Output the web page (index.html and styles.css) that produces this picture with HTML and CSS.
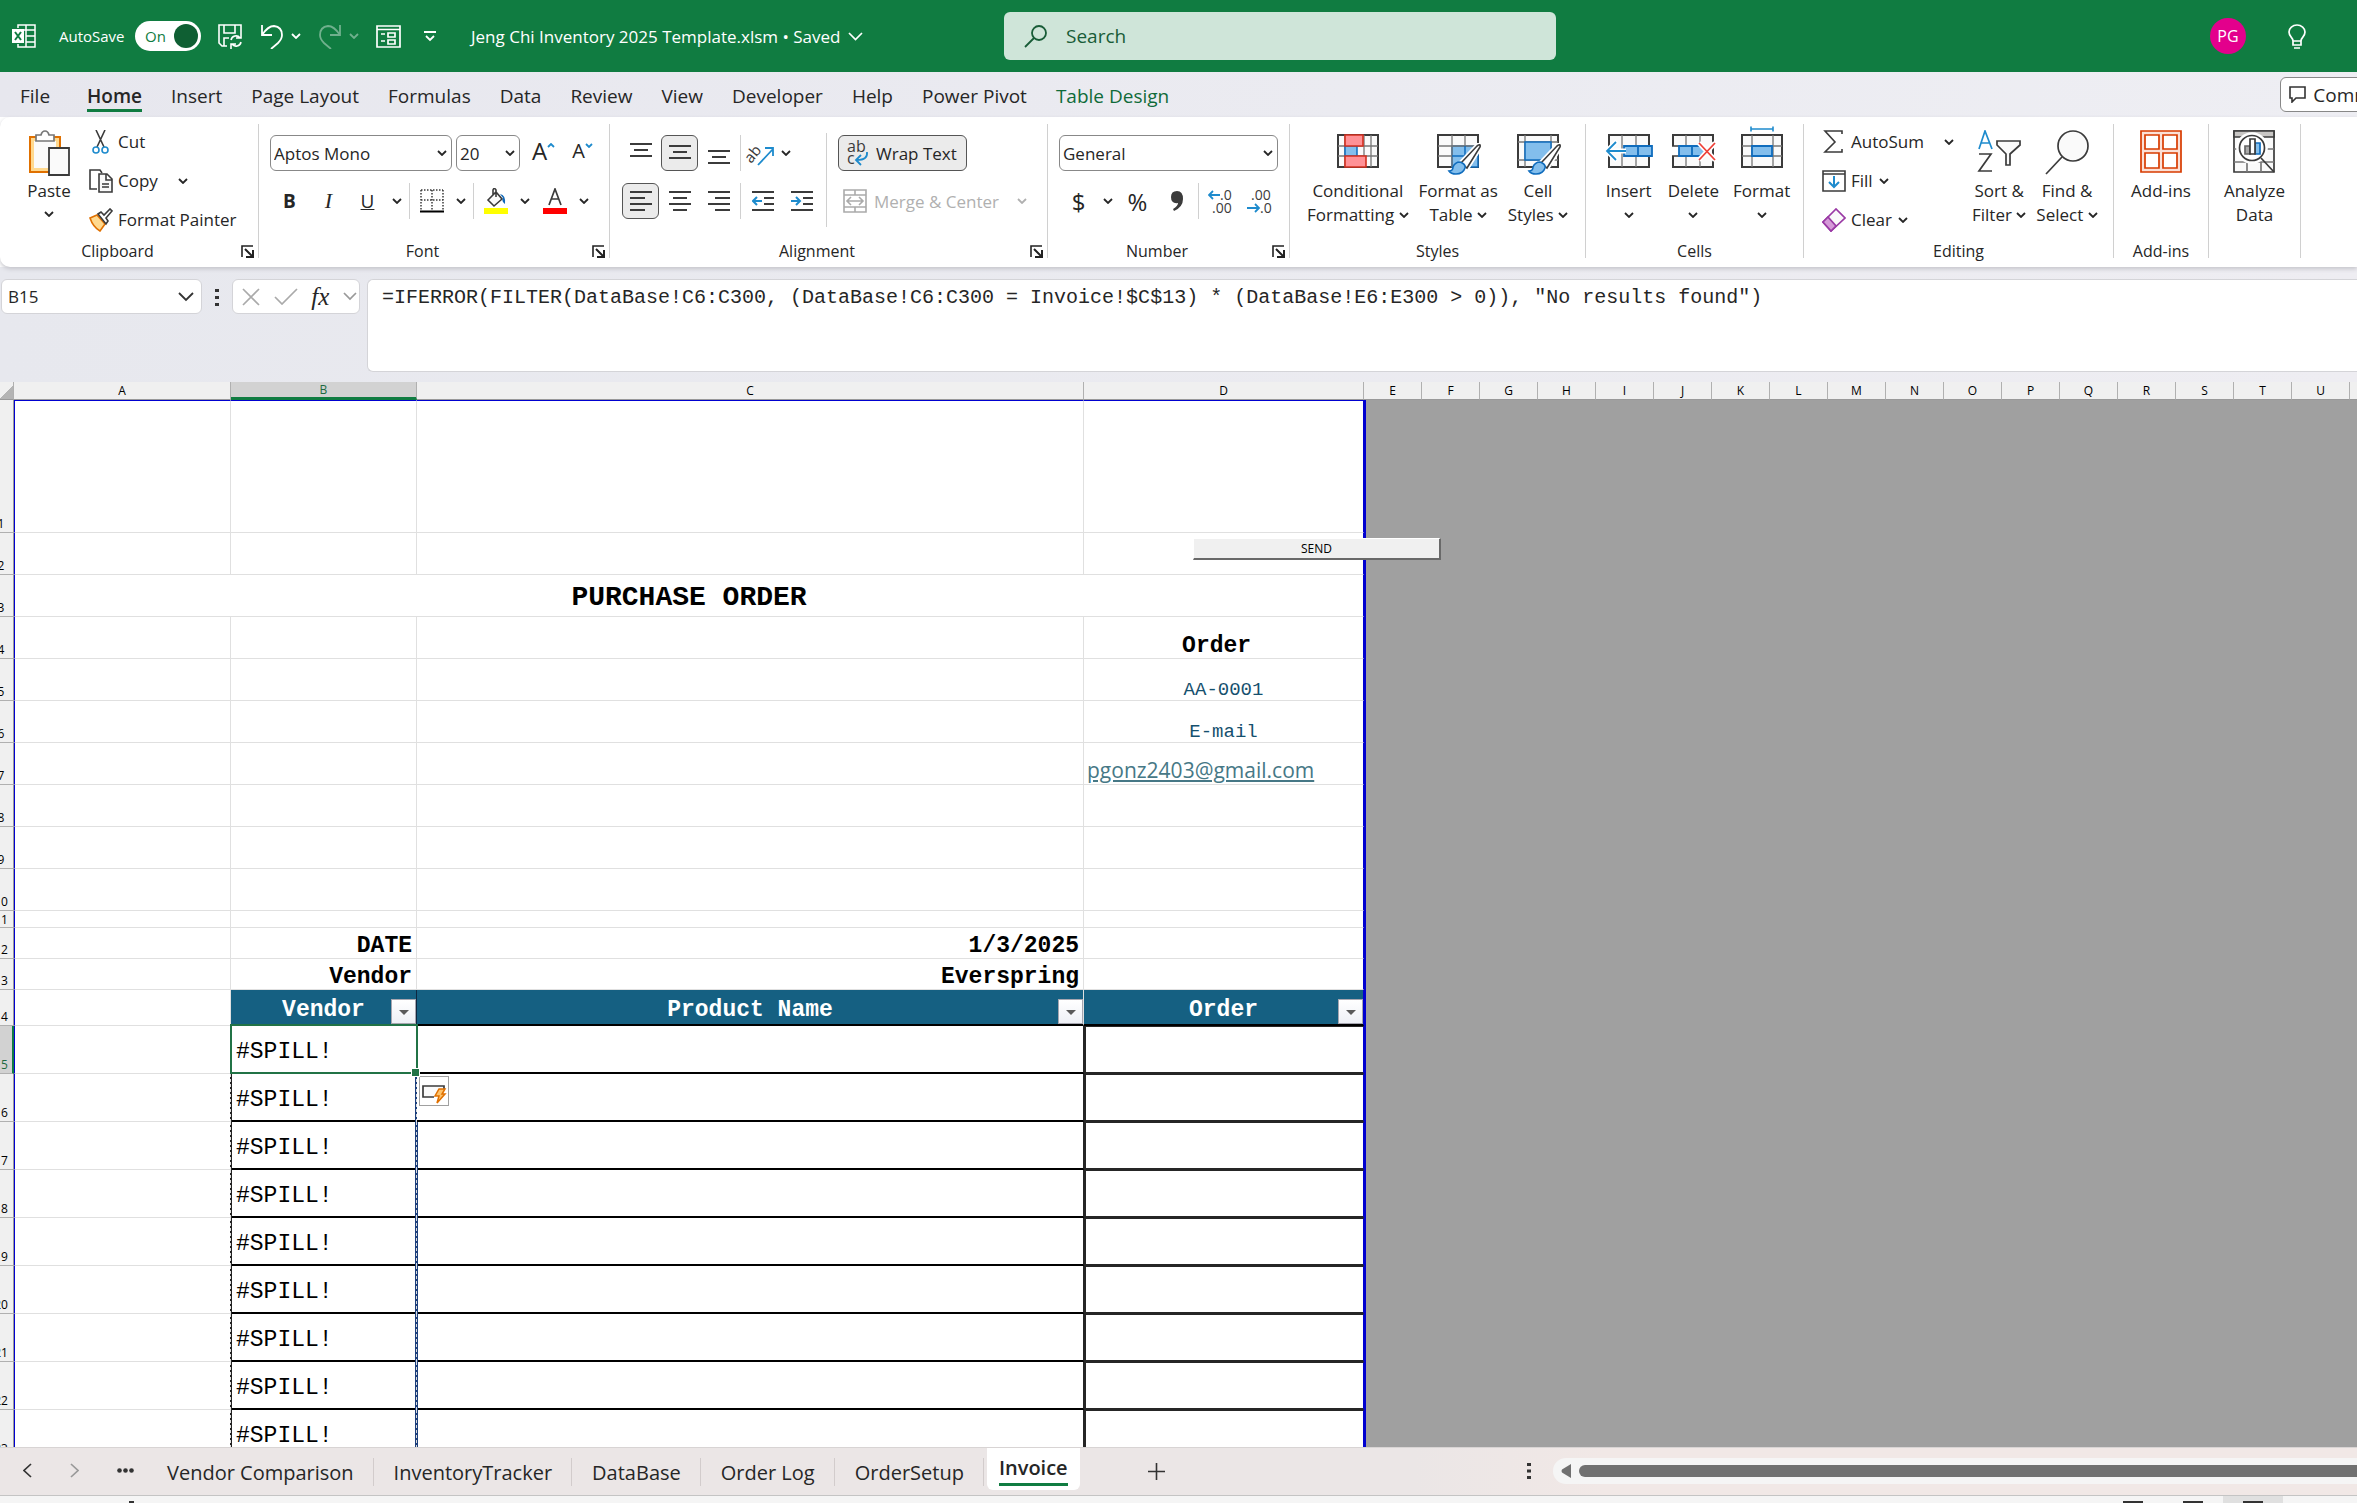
FILE: index.html
```
<!DOCTYPE html>
<html lang="en">
<head>
  <meta charset="UTF-8">
  <title>Jeng Chi Inventory 2025 Template.xlsm</title>
  <link rel="stylesheet" href="styles.css">
</head>
<body>
  <svg class="defs" aria-hidden="true">
    <symbol id="chev" viewBox="0 0 10 6"><path d="M1 1l4 4 4-4" fill="none" stroke="currentColor" stroke-width="1.8"/></symbol>
    <symbol id="launch" viewBox="0 0 13 13"><path d="M1 12V1h11" fill="none" stroke="#222" stroke-width="1.6"/><path d="M4 4l7 7M12 5v7H5" fill="none" stroke="#222" stroke-width="2"/></symbol>
    <symbol id="grid" viewBox="0 0 42 34"><path d="M1 1h40v32H1z" fill="#fafafa" stroke="#3b3b3b" stroke-width="2"/></symbol>
    <symbol id="brush" viewBox="0 0 36 32">
      <path d="M14 20L30 3q4-3 3 1L20 25z" fill="#fff" stroke="#fff" stroke-width="5"/>
      <path d="M14 20L30 3q4-3 3 1L20 25z" fill="#fff" stroke="#3b3b3b" stroke-width="1.6"/>
      <path d="M2 28q4 0 4-4 2-5 7-5 6 2 5 6-2 6-9 6-5 0-7-3z" fill="#83beec" stroke="#0f6cbd" stroke-width="1.6"/>
    </symbol>
  </svg>

  <div class="app">
    <header class="titlebar">
      <div class="quick">
        <svg class="logo" width="24" height="24" viewBox="0 0 24 24" fill="none" stroke="#fff" stroke-width="1.5">
          <path d="M6 4V1h17v22H6v-3M14 1v22M6 6h17M14 12h9M14 18h9"/>
          <path d="M0 5h12v14H0z" fill="#fff" stroke="none"/>
          <path d="M3 8l6 8M9 8l-6 8" stroke="#107c41" stroke-width="2"/>
        </svg>
        <label class="autosave" for="autosave">AutoSave
          <span class="toggle"><input type="checkbox" id="autosave" checked><span>On</span></span>
        </label>
        <button aria-label="Save"><svg width="25" height="25" viewBox="0 0 25 25" fill="none" stroke="#fff" stroke-width="1.6"><path d="M9 22H4l-3-3V1h22v8M6 1v8h11V1M6 22v-8h5M13 16a5 5 0 0 1 9-2M23 9v5h-5M23 18a5 5 0 0 1-9 2M13 25v-5h5"/></svg></button>
        <button class="undo" aria-label="Undo"><svg width="24" height="25" viewBox="0 0 24 25" fill="none" stroke="#fff" stroke-width="1.8"><path d="M2 1v10h10M2 11q6-9 12-9 8 1 8 9 0 4-4 8l-7 6"/></svg><svg class="chev"><use href="#chev"/></svg></button>
        <button class="undo off" aria-label="Redo"><svg width="24" height="25" viewBox="0 0 24 25" fill="none" stroke="#fff" stroke-width="1.8"><path d="M22 1v10H12M22 11q-6-9-12-9-8 1-8 9 0 4 4 8l7 6"/></svg><svg class="chev"><use href="#chev"/></svg></button>
        <button aria-label="Form"><svg width="25" height="23" viewBox="0 0 25 23" fill="none" stroke="#fff" stroke-width="1.7"><path d="M1 1h23v21H1zM1 4.500h23M12 8h7v4h-7zM12 15h7v4h-7zM5 9h4M5 16h4"/></svg></button>
        <button class="customize" aria-label="Customize toolbar"><svg width="12" height="11" viewBox="0 0 12 11" fill="none" stroke="#fff" stroke-width="1.800"><path d="M0 1h12M2 5l4 4 4-4"/></svg></button>
        <button class="filename">Jeng Chi Inventory 2025 Template.xlsm • Saved <svg width="15" height="9" viewBox="0 0 15 9"><path d="M1 1l6.500 6.500L14 1" fill="none" stroke="#fff" stroke-width="1.700"/></svg></button>
      </div>
      <label class="search">
        <svg width="24" height="24" viewBox="0 0 24 24" fill="none" stroke="#185c37" stroke-width="1.800"><circle cx="15" cy="9" r="7"/><path d="M10 14l-9 9"/></svg>
        <input type="text" placeholder="Search" aria-label="Search">
      </label>
      <div class="account">
        <button class="avatar">PG</button>
        <button aria-label="Tips"><svg width="18" height="25" viewBox="0 0 18 25" fill="none" stroke="#fff" stroke-width="1.700"><path d="M5 17c0-4-4-4-4-9a8 7 0 0 1 16 0c0 5-4 5-4 9zM5 17v4h8v-4M6 24h6"/></svg></button>
      </div>
    </header>

    <nav class="tabs">
      <button class="file">File</button>
      <button class="current">Home</button>
      <button>Insert</button>
      <button>Page Layout</button>
      <button>Formulas</button>
      <button>Data</button>
      <button>Review</button>
      <button>View</button>
      <button>Developer</button>
      <button>Help</button>
      <button>Power Pivot</button>
      <button class="context">Table Design</button>
      <button class="comments"><svg width="17" height="17" viewBox="0 0 17 17" fill="none" stroke="#333" stroke-width="1.600"><path d="M1 1h15v11H7l-4 4v-4H1z"/></svg>Comments</button>
    </nav>

    <section class="ribbon">
      <div class="group clipboard">
        <div class="body">
          <button class="big paste">
            <svg width="42" height="46" viewBox="0 0 42 46"><path d="M2 7h30v35H2z" fill="#ffd98f" stroke="#e07000" stroke-width="2"/><path d="M6 11h22v27H6z" fill="#fafafa"/><path d="M8 11V5h5q1-4 4-4t4 4h5v6z" fill="#fff" stroke="#777" stroke-width="1.700"/><path d="M21 18h20v27H21z" fill="#fafafa" stroke="#3b3b3b" stroke-width="1.800"/></svg>
            <span>Paste</span>
            <svg class="chev"><use href="#chev"/></svg>
          </button>
          <div class="stack">
            <button><svg width="24" height="24" viewBox="0 0 24 24" fill="none" stroke-width="1.600"><path d="M7 0l8 17M16 0L8 17" stroke="#3b3b3b"/><circle cx="7" cy="20" r="3" stroke="#1e8bcd"/><circle cx="16" cy="20" r="3" stroke="#1e8bcd"/></svg>Cut</button>
            <button><svg width="24" height="24" viewBox="0 0 24 24" fill="none" stroke="#3b3b3b" stroke-width="1.600"><path d="M8 20H1V1h10l2 3"/><path d="M10 5h8l5 5v13H10zM17 5v6h6M13 15h7M13 18h7" fill="#fafafa"/></svg>Copy<svg class="chev far"><use href="#chev"/></svg></button>
            <button><svg width="24" height="24" viewBox="0 0 24 24" stroke-width="1.600"><path d="M1 10l7-3 8 9-5 7q-7-4-10-13z" fill="#ffd98f" stroke="#e07000"/><path d="M9 6l3-2 3 3 6-6 2 2-6 7 2 3-2 3z" fill="#fff" stroke="#3b3b3b"/></svg>Format Painter</button>
          </div>
        </div>
        <footer class="has-launch">Clipboard<button aria-label="Clipboard options"><svg width="13" height="13"><use href="#launch"/></svg></button></footer>
      </div>

      <div class="group font">
        <div class="body rows">
          <div class="row">
            <span class="combo name"><select aria-label="Font"><option>Aptos Mono</option></select><svg class="chev"><use href="#chev"/></svg></span>
            <span class="combo size"><select aria-label="Font size"><option>20</option></select><svg class="chev"><use href="#chev"/></svg></span>
            <button class="btn grow">A<svg width="8" height="5" viewBox="0 0 8 5"><path d="M1 4l3-3 3 3" fill="none" stroke="#1e8bcd" stroke-width="1.800"/></svg></button>
            <button class="btn grow less">A<svg width="8" height="5" viewBox="0 0 8 5"><path d="M1 1l3 3 3-3" fill="none" stroke="#1e8bcd" stroke-width="1.800"/></svg></button>
          </div>
          <div class="row">
            <button class="btn"><b>B</b></button>
            <button class="btn"><i>I</i></button>
            <button class="btn"><u>U</u></button>
            <button class="drop" aria-label="Underline styles"><svg class="chev"><use href="#chev"/></svg></button>
            <span class="sep"></span>
            <button class="btn" aria-label="Borders"><svg width="24" height="24" viewBox="0 0 24 24" fill="none" stroke="#3b3b3b" stroke-width="1.500"><path d="M1 1h22M1 11h22M1 1v20M12 1v20M23 1v20" stroke-dasharray="1.500 1.500"/><path d="M0 22.500h24" stroke="#000" stroke-width="2"/></svg></button>
            <button class="drop" aria-label="Border styles"><svg class="chev"><use href="#chev"/></svg></button>
            <span class="sep"></span>
            <button class="btn" aria-label="Fill color"><svg width="24" height="26" viewBox="0 0 24 26"><path d="M4 12l8-8 6 7-8 7zM12 9V2q-2-3-3 0v5" fill="#fafafa" stroke="#3b3b3b" stroke-width="1.600"/><path d="M16 6q6 1 5 10-4-3-2-6z" fill="#1068b8"/><path d="M0 20h24v6H0z" fill="#ff0"/></svg></button>
            <button class="drop" aria-label="Fill colors"><svg class="chev"><use href="#chev"/></svg></button>
            <button class="btn" aria-label="Font color"><svg width="24" height="26" viewBox="0 0 24 26"><path d="M6 17l6-16 6 16M8 11h8" fill="none" stroke="#3b3b3b" stroke-width="1.700"/><path d="M0 20h24v6H0z" fill="red"/></svg></button>
            <button class="drop" aria-label="Font colors"><svg class="chev"><use href="#chev"/></svg></button>
          </div>
        </div>
        <footer class="has-launch">Font<button aria-label="Font options"><svg width="13" height="13"><use href="#launch"/></svg></button></footer>
      </div>

      <div class="group align">
        <div class="body">
          <div class="rows">
            <div class="row">
              <button class="btn" aria-label="Top align"><svg class="ln" viewBox="0 0 22 22"><path d="M0 2h22M4 8h14M0 14h22"/></svg></button>
              <button class="btn on" aria-label="Middle align"><svg class="ln" viewBox="0 0 22 22"><path d="M0 4h22M4 10h14M0 16h22"/></svg></button>
              <button class="btn" aria-label="Bottom align"><svg class="ln" viewBox="0 0 22 22"><path d="M0 9h22M4 15h14M0 21h22"/></svg></button>
              <span class="sep"></span>
              <button class="orient" aria-label="Orientation"><svg width="26" height="26" viewBox="0 0 26 26"><text x="-5" y="15" transform="rotate(-50 8 12)" font-size="15" fill="#3b3b3b">ab</text><path d="M9 25L24 9M16 8h8v8" fill="none" stroke="#1e8bcd" stroke-width="1.800"/></svg><svg class="chev"><use href="#chev"/></svg></button>
            </div>
            <div class="row">
              <button class="btn on" aria-label="Align left"><svg class="ln" viewBox="0 0 22 22"><path d="M0 2h22M0 8h15M0 14h22M0 20h15"/></svg></button>
              <button class="btn" aria-label="Center"><svg class="ln" viewBox="0 0 22 22"><path d="M0 2h22M4 8h14M0 14h22M4 20h14"/></svg></button>
              <button class="btn" aria-label="Align right"><svg class="ln" viewBox="0 0 22 22"><path d="M0 2h22M7 8h15M0 14h22M7 20h15"/></svg></button>
              <span class="sep"></span>
              <button class="btn" aria-label="Decrease indent"><svg class="ln" viewBox="0 0 22 22"><path d="M0 2h22M12 8h10M12 14h10M0 20h22"/><path d="M10 11H1M5 7l-4 4 4 4" stroke="#1e8bcd"/></svg></button>
              <button class="btn" aria-label="Increase indent"><svg class="ln" viewBox="0 0 22 22"><path d="M0 2h22M12 8h10M12 14h10M0 20h22"/><path d="M0 11h9M5 7l4 4-4 4" stroke="#1e8bcd"/></svg></button>
            </div>
          </div>
          <span class="sep tall"></span>
          <div class="rows">
            <button class="wrap"><svg width="22" height="26" viewBox="0 0 22 26"><text x="0" y="12" font-size="16" fill="#3b3b3b">ab</text><text x="0" y="24" font-size="16" fill="#3b3b3b">c</text><path d="M20 12q1 8-10 8M14 15l-5 5 5 5" fill="none" stroke="#1e8bcd" stroke-width="1.800"/></svg>Wrap Text</button>
            <button class="merge" disabled><svg width="24" height="24" viewBox="0 0 24 24" fill="none" stroke="#aaa" stroke-width="1.600"><path d="M1 1h22v22H1zM1 6h22M1 18h22M12 1v5M12 18v5M4 12h16M8 8l-4 4 4 4M16 8l4 4-4 4"/></svg>Merge &amp; Center<svg class="chev"><use href="#chev"/></svg></button>
          </div>
        </div>
        <footer class="has-launch">Alignment<button aria-label="Alignment options"><svg width="13" height="13"><use href="#launch"/></svg></button></footer>
      </div>

      <div class="group number">
        <div class="body rows">
          <div class="row">
            <span class="combo format"><select aria-label="Number format"><option>General</option></select><svg class="chev"><use href="#chev"/></svg></span>
          </div>
          <div class="row">
            <button class="btn sign">$</button>
            <button class="drop" aria-label="Currencies"><svg class="chev"><use href="#chev"/></svg></button>
            <button class="btn sign">%</button>
            <button class="btn" aria-label="Comma style"><svg width="12" height="20" viewBox="0 0 12 20"><path d="M6 0q6 0 6 8 0 8-9 12l-1-2q5-3 5-6-7 1-7-6 0-6 6-6z" fill="#3b3b3b"/></svg></button>
            <span class="sep"></span>
            <button class="btn" aria-label="Increase decimal"><svg width="26" height="26" viewBox="0 0 26 26"><text x="12" y="12" font-size="14" fill="#3b3b3b">.0</text><text x="4" y="25" font-size="14" fill="#3b3b3b">.00</text><path d="M12 7H1M5 3L1 7l4 4" fill="none" stroke="#1e8bcd" stroke-width="1.800"/></svg></button>
            <button class="btn" aria-label="Decrease decimal"><svg width="26" height="26" viewBox="0 0 26 26"><text x="4" y="12" font-size="14" fill="#3b3b3b">.00</text><text x="13" y="25" font-size="14" fill="#3b3b3b">.0</text><path d="M0 20h12M8 16l4 4-4 4" fill="none" stroke="#1e8bcd" stroke-width="1.800"/></svg></button>
          </div>
        </div>
        <footer class="has-launch">Number<button aria-label="Number options"><svg width="13" height="13"><use href="#launch"/></svg></button></footer>
      </div>

      <div class="group styles">
        <div class="body bigs">
          <button class="big">
            <svg width="46" height="46" viewBox="-2 -4 46 46"><use href="#grid" width="42" height="34"/><path d="M1 12h40M1 22h40M8 1v32M27 1v32M34 1v32" stroke="#777" stroke-width="1.300"/><path d="M8 12h12v10H8z" fill="#83beec" stroke="#0f6cbd" stroke-width="1.500"/><path d="M8 1h18v11H8zM8 22h21v11H8z" fill="#ff9196" stroke="#d32f1f" stroke-width="1.600"/></svg>
            <span>Conditional<br>Formatting <svg class="chev"><use href="#chev"/></svg></span>
          </button>
          <button class="big">
            <svg width="46" height="46" viewBox="-2 -4 46 46"><use href="#grid" width="42" height="34"/><path d="M15 12h26v21H15z" fill="#83beec" stroke="#0f6cbd" stroke-width="1.500"/><path d="M1 12h40M1 22h14M15 1v32M28 1v11" stroke="#777" stroke-width="1.300"/><path d="M15 22h26M28 12v21" stroke="#0f6cbd" stroke-width="1.500"/><use href="#brush" x="10" y="9" width="36" height="32"/></svg>
            <span>Format as<br>Table <svg class="chev"><use href="#chev"/></svg></span>
          </button>
          <button class="big">
            <svg width="46" height="46" viewBox="-2 -4 46 46"><use href="#grid" width="42" height="34"/><path d="M1 8h40M1 26h40M8 1v32M34 1v32" stroke="#777" stroke-width="1.300"/><path d="M8 8h26v18H8z" fill="#83beec" stroke="#0f6cbd" stroke-width="1.500"/><use href="#brush" x="10" y="9" width="36" height="32"/></svg>
            <span>Cell<br>Styles <svg class="chev"><use href="#chev"/></svg></span>
          </button>
        </div>
        <footer>Styles</footer>
      </div>

      <div class="group cells">
        <div class="body bigs">
          <button class="big">
            <svg width="50" height="46" viewBox="-4 -4 50 46"><use href="#grid" width="42" height="34"/><path d="M14 1v32M28 1v32" stroke="#777" stroke-width="1.300"/><path d="M16 12h28v10H16zM30 12v10" fill="#83beec" stroke="#0f6cbd" stroke-width="1.800"/><path d="M18 17H0M9 7L-1 17 9 27" fill="none" stroke="#fff" stroke-width="5"/><path d="M18 17H-1M8 8L-1 17 8 26" fill="none" stroke="#1e8bcd" stroke-width="1.800"/></svg>
            <span>Insert<br><svg class="chev"><use href="#chev"/></svg></span>
          </button>
          <button class="big">
            <svg width="50" height="46" viewBox="-4 -4 50 46"><use href="#grid" width="42" height="34"/><path d="M-1 12h8v10h-8z" fill="#fff"/><path d="M14 1v32M28 1v32" stroke="#777" stroke-width="1.300"/><path d="M0 12h8M0 22h8" stroke="#3b3b3b" stroke-width="1.500"/><path d="M7 12h22l5 5-5 5H7zM20 12v10" fill="#83beec" stroke="#0f6cbd" stroke-width="1.800"/><path d="M27 9l16 17M43 9L27 26" stroke="#fff" stroke-width="5"/><path d="M27 9l16 17M43 9L27 26" stroke="#ee4038" stroke-width="1.800"/></svg>
            <span>Delete<br><svg class="chev"><use href="#chev"/></svg></span>
          </button>
          <button class="big">
            <svg width="50" height="46" viewBox="-4 -4 50 46" overflow="visible"><use href="#grid" width="42" height="34"/><path d="M1 12h40M1 22h40M11 1v32M32 1v32" stroke="#777" stroke-width="1.300"/><path d="M11 12h20v10H11z" fill="#83beec" stroke="#0f6cbd" stroke-width="1.800"/><path d="M10-5h22M10-7.500v5M32-7.500v5" stroke="#1e8bcd" stroke-width="1.600"/></svg>
            <span>Format<br><svg class="chev"><use href="#chev"/></svg></span>
          </button>
        </div>
        <footer>Cells</footer>
      </div>

      <div class="group editing">
        <div class="body">
          <div class="stack">
            <button><svg width="24" height="24" viewBox="0 0 24 24" fill="none" stroke="#3b3b3b" stroke-width="1.600"><path d="M20 4V1H3l10 11L3 22h17v-3"/></svg>AutoSum<svg class="chev far"><use href="#chev"/></svg></button>
            <button><svg width="24" height="24" viewBox="0 0 24 24" fill="none" stroke="#3b3b3b" stroke-width="1.600"><path d="M1 2h22v20H1zM1 5h22"/><path d="M12 7v11M7 13l5 5 5-5" stroke="#1e8bcd" stroke-width="2"/></svg>Fill <svg class="chev"><use href="#chev"/></svg></button>
            <button><svg width="24" height="24" viewBox="0 0 24 24" stroke="#9a3aa5" stroke-width="1.700"><path d="M1 14L14 1l9 9L9 23z" fill="#fafafa"/><path d="M1 14l5-5 8 9-5 5z" fill="#d59ad8"/></svg>Clear <svg class="chev"><use href="#chev"/></svg></button>
          </div>
          <button class="big">
            <svg width="44" height="46" viewBox="0 0 44 46" fill="none" stroke="#3b3b3b" stroke-width="1.700"><path d="M2 19L8 1l7 18M4 13h9" stroke="#1e8bcd"/><path d="M2 24h12L2 41h13"/><path d="M20 11h23v4l-10 9v11h-4V24l-9-9z" fill="#fafafa"/></svg>
            <span>Sort &amp;<br>Filter <svg class="chev"><use href="#chev"/></svg></span>
          </button>
          <button class="big">
            <svg width="46" height="46" viewBox="0 0 46 46" fill="#fafafa" stroke="#3b3b3b" stroke-width="1.700"><circle cx="29" cy="16" r="15"/><path d="M18 27L2 44"/></svg>
            <span>Find &amp;<br>Select <svg class="chev"><use href="#chev"/></svg></span>
          </button>
        </div>
        <footer>Editing</footer>
      </div>

      <div class="group addins">
        <div class="body bigs">
          <button class="big">
            <svg width="42" height="46" viewBox="0 0 42 46" fill="#fff" stroke="#d83b01" stroke-width="1.700"><path d="M1 1h40v41H1z" fill="#fbe0d6"/><path d="M5 5h14v14H5zM23 5h14v14H23zM5 23h14v15H5zM23 23h14v15H23z"/></svg>
            <span>Add-ins</span>
          </button>
        </div>
        <footer>Add-ins</footer>
      </div>

      <div class="group analyze">
        <div class="body bigs">
          <button class="big">
            <svg width="42" height="46" viewBox="0 0 42 46" fill="none" stroke="#3b3b3b" stroke-width="1.700"><path d="M1 1h40v41H1z" fill="#fafafa"/><path d="M1 1h40v6H1z" fill="#c8c6c4"/><path d="M1 19h6M1 32h40M34 19h7M14 32v10M28 32v10" stroke="#777"/><circle cx="19" cy="18" r="15" fill="#fff" stroke="#fff"/><path d="M12 16h5v8h-5z" fill="#aaa" stroke="#666"/><path d="M22 13h5v11h-5z" fill="#83beec" stroke="#0f6cbd"/><path d="M17 9h5v15h-5z" fill="#fff"/><circle cx="19" cy="18" r="12.500"/><path d="M28 28l13 14"/></svg>
            <span>Analyze<br>Data</span>
          </button>
        </div>
        <footer></footer>
      </div>
    </section>

    <section class="formula-bar">
      <div class="box name-box"><input type="text" value="B15" aria-label="Name box"><svg width="16" height="10" viewBox="0 0 16 10"><path d="M1 1l7 7 7-7" fill="none" stroke="#333" stroke-width="1.800"/></svg></div>
      <svg width="4" height="17" viewBox="0 0 4 17" fill="#333"><path d="M0 0h4v3H0zM0 7h4v3H0zM0 14h4v3H0z"/></svg>
      <div class="box fx">
        <button aria-label="Cancel"><svg width="18" height="18" viewBox="0 0 18 18" fill="none" stroke="#aaa" stroke-width="1.700"><path d="M1 1l16 16M17 1L1 17"/></svg></button>
        <button aria-label="Enter"><svg width="24" height="17" viewBox="0 0 24 17" fill="none" stroke="#aaa" stroke-width="1.700"><path d="M1 9l7 7L23 1"/></svg></button>
        <button class="fn">fx</button>
        <button aria-label="More"><svg width="14" height="9" viewBox="0 0 14 9"><path d="M1 1l6 6 6-6" fill="none" stroke="#999" stroke-width="1.700"/></svg></button>
      </div>
      <textarea class="box formula" aria-label="Formula" spellcheck="false">=IFERROR(FILTER(DataBase!C6:C300, (DataBase!C6:C300 = Invoice!$C$13) * (DataBase!E6:E300 &gt; 0)), "No results found")</textarea>
    </section>

    <main class="sheet">
      <table>
        <colgroup><col class="c-num"><col class="c-a"><col class="c-b"><col class="c-c"><col class="c-d"><col span="18" class="c-x"></colgroup>
        <thead>
          <tr><th class="corner"></th><th>A</th><th class="sel">B</th><th>C</th><th>D</th><th>E</th><th>F</th><th>G</th><th>H</th><th>I</th><th>J</th><th>K</th><th>L</th><th>M</th><th>N</th><th>O</th><th>P</th><th>Q</th><th>R</th><th>S</th><th>T</th><th>U</th><th></th></tr>
        </thead>
        <tbody>
          <tr class="r1"><th><span>1</span></th><td></td><td></td><td></td><td></td><td class="outside" colspan="18" rowspan="23"></td></tr>
          <tr><th><span>2</span></th><td></td><td></td><td></td><td class="send-cell"><button class="send">SEND</button></td></tr>
          <tr><th><span>3</span></th><td colspan="4" class="title">PURCHASE ORDER</td></tr>
          <tr><th><span>4</span></th><td></td><td></td><td></td><td class="strong center">Order </td></tr>
          <tr><th><span>5</span></th><td></td><td></td><td></td><td class="info center">AA-0001</td></tr>
          <tr><th><span>6</span></th><td></td><td></td><td></td><td class="info center">E-mail</td></tr>
          <tr><th><span>7</span></th><td></td><td></td><td></td><td class="mail"><a href="mailto:pgonz2403@gmail.com">pgonz2403@gmail.com</a></td></tr>
          <tr><th><span>8</span></th><td></td><td></td><td></td><td></td></tr>
          <tr><th><span>9</span></th><td></td><td></td><td></td><td></td></tr>
          <tr><th><span>10</span></th><td></td><td></td><td></td><td></td></tr>
          <tr class="r11"><th><span>11</span></th><td></td><td></td><td></td><td></td></tr>
          <tr class="r12"><th><span>12</span></th><td></td><td class="strong right">DATE</td><td class="strong right">1/3/2025</td><td></td></tr>
          <tr class="r12"><th><span>13</span></th><td></td><td class="strong right">Vendor</td><td class="strong right">Everspring</td><td></td></tr>
          <tr class="head"><th><span>14</span></th><td></td>
            <td>Vendor<button class="filter" aria-label="Filter Vendor"></button></td>
            <td>Product Name<button class="filter" aria-label="Filter Product Name"></button></td>
            <td>Order<button class="filter" aria-label="Filter Order"></button></td></tr>
          <tr class="item active"><th><span>15</span></th><td></td><td>#SPILL!</td><td></td><td></td></tr>
          <tr class="item"><th><span>16</span></th><td></td><td>#SPILL!</td><td class="tip-cell"><button class="tip" aria-label="Spill options"><svg width="26" height="26" viewBox="0 0 26 26"><path d="M13 19H2V8h21v4" fill="#fafafa" stroke="#3b3b3b" stroke-width="1.700"/><path d="M18 11h6l-3 5h3l-8 9 2-7h-4z" fill="#ffc36b" stroke="#e07000" stroke-width="1.500"/></svg></button></td><td></td></tr>
          <tr class="item"><th><span>17</span></th><td></td><td>#SPILL!</td><td></td><td></td></tr>
          <tr class="item"><th><span>18</span></th><td></td><td>#SPILL!</td><td></td><td></td></tr>
          <tr class="item"><th><span>19</span></th><td></td><td>#SPILL!</td><td></td><td></td></tr>
          <tr class="item"><th><span>20</span></th><td></td><td>#SPILL!</td><td></td><td></td></tr>
          <tr class="item"><th><span>21</span></th><td></td><td>#SPILL!</td><td></td><td></td></tr>
          <tr class="item"><th><span>22</span></th><td></td><td>#SPILL!</td><td></td><td></td></tr>
          <tr class="item"><th><span>23</span></th><td></td><td>#SPILL!</td><td></td><td></td></tr>
        </tbody>
      </table>
    </main>

    <nav class="sheets">
      <div class="arrows">
        <button aria-label="Previous sheet"><svg width="9" height="15" viewBox="0 0 9 15"><path d="M8 1L1 7.500 8 14" fill="none" stroke="#333" stroke-width="1.700"/></svg></button>
        <button aria-label="Next sheet"><svg width="9" height="15" viewBox="0 0 9 15"><path d="M1 1l7 6.500L1 14" fill="none" stroke="#999" stroke-width="1.700"/></svg></button>
        <button aria-label="All sheets"><svg width="17" height="5" viewBox="0 0 17 5" fill="#333"><circle cx="2.500" cy="2.500" r="2.300"/><circle cx="8.500" cy="2.500" r="2.300"/><circle cx="14.500" cy="2.500" r="2.300"/></svg></button>
      </div>
      <button class="tab">Vendor Comparison</button>
      <button class="tab">InventoryTracker</button>
      <button class="tab">DataBase</button>
      <button class="tab">Order Log</button>
      <button class="tab">OrderSetup</button>
      <button class="tab open"><span>Invoice</span></button>
      <button class="add" aria-label="New sheet"><svg width="17" height="17" viewBox="0 0 17 17"><path d="M8.500 0v17M0 8.500h17" stroke="#333" stroke-width="1.600"/></svg></button>
      <div class="scroll">
        <svg width="4" height="16" viewBox="0 0 4 16" fill="#333"><path d="M0 0h4v3H0zM0 6.500h4v3H0zM0 13h4v3H0z"/></svg>
        <div class="track">
          <svg width="10" height="14" viewBox="0 0 10 14"><path d="M10 0v14L1 8.500q-1-1.500 0-3z" fill="#707070"/></svg>
          <div class="thumb"></div>
        </div>
      </div>
    </nav>

    <footer class="status">
      <span class="record"></span>
      <div class="views"><span></span><span></span><span class="on"></span></div>
    </footer>
  </div>
</body>
</html>
```

FILE: styles.css
```
* {
  box-sizing: border-box;
}

body {
  margin: 0;
  font-family: "Open Sans", "Noto Sans", sans-serif;
  font-size: 17px;
  color: #262626;
  overflow: hidden;
}

button, input, select, textarea {
  font: inherit;
  color: inherit;
  border: none;
  background: none;
  padding: 0;
  margin: 0;
}

button {
  cursor: pointer;
  white-space: nowrap;
}

svg {
  display: block;
  flex: none;
}

.defs {
  position: absolute;
  width: 0;
  height: 0;
}

.chev {
  width: 10px;
  height: 6px;
}

.app {
  display: flex;
  flex-direction: column;
  height: 100vh;
}

/* title bar */
.titlebar {
  flex: none;
  display: grid;
  grid-template-columns: 1004fr 552fr 801fr;
  align-items: center;
  height: 72px;
  background: #107c41;
  color: white;
}

.quick {
  display: flex;
  align-items: center;
  gap: 17px;
  padding-left: 12px;
  font-size: 15px;
}

.autosave {
  display: flex;
  align-items: center;
  justify-content: space-between;
  width: 142px;
  margin-left: 6px;
}

.toggle {
  display: flex;
  align-items: center;
  flex-direction: row-reverse;
  justify-content: space-between;
  width: 66px;
  height: 30px;
  padding: 0 3px 0 10px;
  border-radius: 15px;
  background: white;
  color: #107c41;
}

.toggle input {
  appearance: none;
  width: 24px;
  height: 24px;
  border-radius: 50%;
  background: #0f5f33;
}

.undo {
  display: flex;
  align-items: center;
  gap: 7px;
}

.undo.off {
  opacity: 0.4;
}

.customize {
  margin: 0 18px 0 6px;
}

.filename {
  display: flex;
  align-items: center;
  gap: 8px;
  font-size: 17px;
}

.search {
  display: flex;
  align-items: center;
  gap: 18px;
  height: 48px;
  padding: 0 20px;
  border-radius: 6px;
  background: #cfe5d9;
  font-size: 19px;
}

.search input {
  flex: 1;
}

.search input::placeholder {
  color: #185c37;
  opacity: 1;
}

.account {
  display: flex;
  align-items: center;
  justify-content: flex-end;
  gap: 42px;
  padding-right: 51px;
}

.avatar {
  width: 36px;
  height: 36px;
  border-radius: 50%;
  background: #e3008c;
  font-size: 16px;
}

/* ribbon tabs */
.tabs {
  flex: none;
  display: flex;
  align-items: center;
  gap: 29px;
  height: 45px;
  padding-left: 20px;
  background: linear-gradient(90deg, #e7e7ee, #eeeef3);
  font-size: 19px;
  overflow: hidden;
}

.tabs button {
  height: 35px;
  padding-top: 5px;
  border-bottom: 3px solid transparent;
}

.tabs .file {
  margin-right: 8px;
}

.tabs .current {
  font-weight: 600;
  border-color: #107c41;
}

.tabs .context {
  color: #0f6b39;
}

.tabs .comments {
  display: flex;
  align-items: center;
  gap: 7px;
  flex: none;
  margin-left: auto;
  margin-right: -62px;
  height: 35px;
  padding: 0 8px;
  border: 1px solid #888;
  border-radius: 6px;
  background: white;
}

/* ribbon */
.ribbon {
  flex: none;
  display: flex;
  height: 150px;
  padding-top: 7px;
  background: white;
  border-radius: 10px 0 0 10px;
  box-shadow: 0 2px 4px #c4c4ca;
  position: relative;
}

.group {
  flex: none;
  display: flex;
  flex-direction: column;
  height: 134px;
  border-right: 1px solid #d0d0d0;
}

.clipboard { width: 259px; }
.font { width: 351px; }
.align { width: 438px; }
.number { width: 242px; }
.styles { width: 296px; }
.cells { width: 218px; }
.editing { width: 310px; }
.addins { width: 95px; }
.analyze { width: 92px; }

.body {
  flex: 1;
  display: flex;
  min-height: 0;
}

.group footer {
  flex: none;
  display: flex;
  align-items: center;
  justify-content: center;
  position: relative;
  height: 20px;
  padding-top: 5px;
  font-size: 16px;
}

.group .has-launch {
  padding-right: 23px;
}

.group footer button {
  position: absolute;
  right: 4px;
  bottom: 0;
}

.big {
  display: flex;
  flex-direction: column;
  align-items: center;
  padding-top: 6px;
  line-height: 24px;
}

.big > svg:first-child {
  margin-bottom: 3px;
}

.big .chev {
  display: inline-block;
  vertical-align: 3px;
}

.bigs {
  justify-content: center;
  gap: 12px;
}

.styles .bigs {
  gap: 10px;
}

.cells .bigs {
  gap: 14px;
  padding-left: 5px;
}

.paste {
  width: 64px;
  margin-left: 17px;
}

.paste > .chev {
  margin-top: 8px;
}

.stack {
  display: flex;
  flex-direction: column;
  margin-top: -2px;
  padding-left: 8px;
}

.stack button {
  display: flex;
  align-items: center;
  gap: 6px;
  height: 39px;
  flex: none;
}

.stack svg:first-child {
  margin-right: -1px;
}

.chev.far {
  margin-left: 14px;
}

.editing .stack {
  width: 158px;
  padding-left: 18px;
}

.editing .body {
  gap: 10px;
}

.rows {
  display: flex;
  flex-direction: column;
  gap: 12px;
  padding: 11px 0 0 11px;
}

.row {
  display: flex;
  align-items: center;
  height: 36px;
}

.btn {
  display: flex;
  align-items: center;
  justify-content: center;
  width: 37px;
  height: 36px;
  margin: 0 1px;
  border-radius: 6px;
  font-size: 19px;
}

.btn.on {
  background: #ebebeb;
  border: 1px solid #555;
}

.btn i {
  font-family: "Liberation Serif", serif;
  font-size: 22px;
}

.grow {
  align-items: flex-start;
  font-size: 24px;
  line-height: 32px;
}

.grow svg {
  margin-top: 8px;
}

.grow.less {
  font-size: 20px;
}

.drop {
  display: flex;
  justify-content: center;
  width: 20px;
}

.sep {
  width: 1px;
  height: 36px;
  margin: 0 2px;
  background: #d0d0d0;
}

.sep.tall {
  height: 94px;
  margin: 9px 0 0 5px;
}

.ln {
  width: 22px;
  height: 22px;
  fill: none;
  stroke: #3b3b3b;
  stroke-width: 2;
}

.orient {
  display: flex;
  align-items: center;
  gap: 6px;
  padding-left: 6px;
}

.orient svg {
  overflow: visible;
}

.combo {
  display: flex;
  align-items: center;
  height: 36px;
  margin-right: 4px;
  padding: 0 4px 0 3px;
  border: 1px solid #888;
  border-radius: 6px;
}

.combo select {
  appearance: none;
  flex: 1;
  min-width: 0;
}

.combo.name { width: 182px; }
.combo.size { width: 64px; }
.combo.format { width: 219px; }

.wrap, .merge {
  display: flex;
  align-items: center;
  gap: 7px;
  height: 36px;
  padding: 0 9px 0 8px;
}

.wrap {
  align-self: flex-start;
  border: 1px solid #555;
  border-radius: 6px;
  background: #ebebeb;
}

.merge {
  padding-left: 5px;
  color: #b0b0b0;
}

.merge .chev {
  margin-left: 11px;
}

.sign {
  font-size: 24px;
}

/* formula bar */
.formula-bar {
  flex: none;
  display: flex;
  align-items: flex-start;
  height: 115px;
  padding: 12px 0 0 1px;
  background: linear-gradient(90deg, #e7e8ee, #eeedf2);
}

.formula-bar > svg {
  margin: 10px 13px 0 13px;
}

.box {
  display: flex;
  align-items: center;
  height: 35px;
  border: 1px solid #d4d4d8;
  border-radius: 6px;
  background: white;
}

.name-box {
  width: 201px;
  padding: 0 7px 0 6px;
}

.name-box input {
  flex: 1;
  min-width: 0;
}

.fx {
  width: 128px;
  padding: 0 2px 0 9px;
  justify-content: space-between;
}

.fx .fn {
  font: italic 25px "Liberation Serif", serif;
}

.formula {
  flex: 1;
  height: 93px;
  margin-left: 7px;
  padding: 5px 14px;
  border-radius: 6px 0 0 6px;
  border-right: none;
  font: 20px/26px "Liberation Mono", monospace;
  resize: none;
  overflow: hidden;
}

/* worksheet */
.sheet {
  flex: 1;
  min-height: 0;
  overflow: hidden;
  background: #a0a0a0;
}

table {
  table-layout: fixed;
  width: 2408px;
  border-collapse: separate;
  border-spacing: 0;
  font-family: "Liberation Mono", monospace;
}

.c-num { width: 14px; }
.c-a { width: 217px; }
.c-b { width: 186px; }
.c-c { width: 667px; }
.c-d { width: 280px; }
.c-x { width: 58px; }

th {
  padding: 0;
  background: #f0f0f0;
  font: 12px/16px "Open Sans", sans-serif;
  color: black;
}

thead th {
  height: 18px;
  border-right: 1px solid #b0b0b0;
  border-bottom: 1px solid #999;
}

thead .corner {
  background: linear-gradient(135deg, #f0f0f0 55%, #b4b4b4 55%);
}

thead .sel {
  background: #d2d2d2;
  border-bottom: 3px solid #107c41;
  color: #1e6b41;
  line-height: 14px;
}

tbody th {
  vertical-align: bottom;
  overflow: hidden;
  border-right: 1px solid #999;
  border-bottom: 1px solid #b0b0b0;
}

/* the row numbers are scrolled half out of view */
tbody th span {
  display: block;
  width: 26px;
  margin-left: -12px;
}

td {
  height: 42px;
  padding: 0 4px;
  background: white;
  border-right: 1px solid #e0e0e0;
  border-bottom: 1px solid #e0e0e0;
  vertical-align: bottom;
  font-size: 23px;
  line-height: 24px;
  color: black;
  white-space: pre;
}

td:nth-child(2) {
  border-left: 1px solid #0000d0;
}

td:nth-child(5), .title {
  border-right-color: #0000d0;
}

.r1 td {
  height: 133px;
  border-top: 1px solid #0000d0;
}

.r11 td {
  height: 17px;
  line-height: 14px;
}

.r11 th {
  line-height: 15px;
}

.r12 td {
  height: 31px;
}

td.outside {
  background: #a0a0a0;
  border: none;
  border-left: 2px solid #0000d0;
}

.title {
  padding-top: 4px;
  text-align: center;
  vertical-align: middle;
  font-size: 28px;
  font-weight: bold;
}

.strong { font-weight: bold; }
.center { text-align: center; }
.right { text-align: right; }

.info {
  font-size: 19px;
  line-height: 20px;
  color: #15506e;
}

.mail {
  padding-left: 3px;
}

td a {
  font-family: "Open Sans", sans-serif;
  font-size: 21px;
  color: #467886;
}

.send-cell {
  position: relative;
}

.send {
  position: absolute;
  left: 109px;
  top: 5px;
  z-index: 1;
  width: 248px;
  height: 22px;
  background: #f0f0f0;
  border: 1px solid white;
  border-right: 2px solid #696969;
  border-bottom: 2px solid #696969;
  font: 12px/18px "Open Sans", sans-serif;
}

.head td {
  height: 36px;
}

.head td:nth-child(n+3) {
  position: relative;
  padding-top: 5px;
  vertical-align: middle;
  background: #156082;
  border-bottom: 2px solid black;
  color: white;
  font-weight: bold;
  text-align: center;
}

.head td:nth-child(3) {
  border-right-color: #0e2841;
}

.filter {
  position: absolute;
  right: 0;
  bottom: 0;
  width: 25px;
  height: 25px;
  background: linear-gradient(white, #eef0f6);
  border: 1px solid #a6a6b0;
}

.filter::after {
  content: "";
  display: block;
  width: 0;
  margin: 2px auto 0;
  border: 5px solid transparent;
  border-top-color: #5a5a5a;
  border-bottom: none;
}

.item td {
  height: 48px;
  vertical-align: middle;
  padding: 5px 4px 0 5px;
}

.item td:nth-child(n+3) {
  border-bottom: 2px solid black;
}

.item td:nth-child(3) {
  position: relative;
  border-right: 1px solid #1c3f7c;
}

/* spill range outline */
.item td:nth-child(3)::after {
  content: "";
  position: absolute;
  inset: 0 -2px -2px -1px;
  border-left: 2px solid #222;
  border-right: 3px solid #1c3f7c;
}

.item td:nth-child(3)::before {
  content: "";
  position: absolute;
  inset: 0 -1px -2px -1px;
  z-index: 1;
  border-left: 1px dashed #ddd;
  border-right: 1px dashed #ddd;
}

.item td:nth-child(4) {
  border-right-color: #262626;
}

.item td:nth-child(5) {
  border-left: 2px solid #262626;
  border-top: 1px solid #262626;
  border-bottom-color: #262626;
}

.active th {
  background: #d2d2d2;
  border-right: 2px solid #107c41;
  color: #1e6b41;
}

.item.active td:nth-child(3)::after {
  inset: -2px -2px -2px -1px;
  border: 2px solid #217346;
  z-index: 1;
}

.item.active td:nth-child(3)::before {
  inset: auto -3px -4px auto;
  z-index: 2;
  width: 7px;
  height: 7px;
  background: #217346;
  border: none;
  outline: 1px solid white;
}

.tip-cell {
  position: relative;
}

.tip {
  position: absolute;
  left: 2px;
  top: 2px;
  width: 30px;
  height: 30px;
  padding: 1px;
  background: white;
  border: 1px solid #a0a0a0;
}

/* sheet tabs */
.sheets {
  flex: none;
  display: flex;
  height: 48px;
  background: linear-gradient(90deg, #ebe6e6 60%, #f1e8e6 68%);
  border-top: 1px solid #d8d4d4;
  font-size: 20px;
}

.arrows {
  display: flex;
  align-items: center;
  gap: 38px;
  width: 147px;
  padding: 0 0 2px 23px;
}

.tab {
  position: relative;
  padding: 2px 20px 0;
}

.tab::after {
  content: "";
  position: absolute;
  top: 10px;
  right: 0;
  width: 1px;
  height: 28px;
  background: #d2cccc;
}

.open {
  height: 42px;
  margin: 0 6px 0 3px;
  padding: 0 12px;
  background: white;
  border-radius: 0 0 6px 6px;
  font-weight: 600;
}

.open::after {
  display: none;
}

.open span {
  display: block;
  border-bottom: 3px solid #107c41;
  line-height: 31px;
}

.add {
  margin-left: 62px;
}

.scroll {
  flex: none;
  display: flex;
  align-items: center;
  gap: 22px;
  width: 35.2%;
  margin-left: auto;
  padding-bottom: 2px;
}

.track {
  flex: 1;
  display: flex;
  align-items: center;
  gap: 8px;
  height: 26px;
  padding-left: 8px;
  background: #f5f5f5;
  border-radius: 13px 0 0 13px;
}

.thumb {
  flex: 1;
  height: 12px;
  border-radius: 6px 0 0 6px;
  background: #707070;
}

.status {
  flex: none;
  display: flex;
  align-items: flex-end;
  justify-content: space-between;
  height: 8px;
  padding: 0 74px 0 129px;
  background: #f5f5f5;
  border-top: 1px solid #c4c4c4;
}

.record {
  width: 5px;
  height: 2px;
  background: #333;
}

.views {
  display: flex;
  height: 7px;
}

.views span {
  width: 60px;
  border: 20px solid transparent;
  border-width: 5px 20px 0;
  background: #333 content-box;
}

.views .on {
  background: linear-gradient(#333, #333) content-box, #e0e0e0 border-box;
}
```
